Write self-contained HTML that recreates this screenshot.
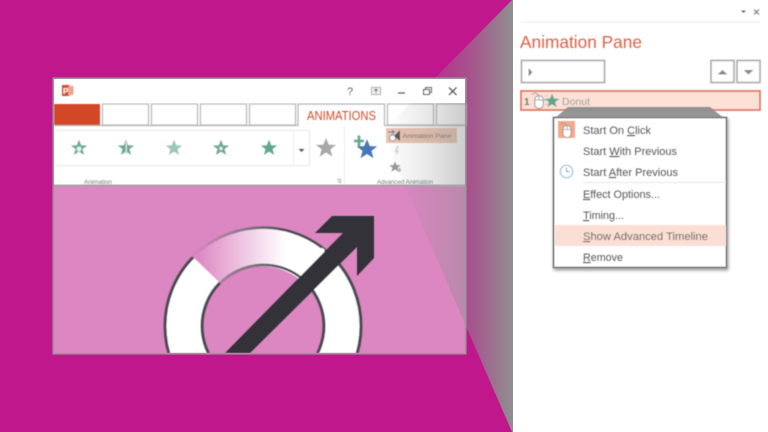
<!DOCTYPE html>
<html><head><meta charset="utf-8"><style>
html,body{margin:0;padding:0;width:768px;height:432px;overflow:hidden;background:#c0178c}
svg{display:block;font-family:"Liberation Sans",sans-serif}
.u{text-decoration:underline}
</style></head><body>
<svg width="768" height="432" viewBox="0 0 768 432" xmlns="http://www.w3.org/2000/svg">
<defs>
<clipPath id="slide"><rect x="54" y="186" width="411" height="167"/></clipPath>
<linearGradient id="beam" gradientUnits="userSpaceOnUse" x1="386" y1="0" x2="512" y2="0">
<stop offset="0" stop-color="#8f8f8f" stop-opacity="0"/>
<stop offset=".3" stop-color="#8f8f8f" stop-opacity=".18"/>
<stop offset=".63" stop-color="#8f8f8f" stop-opacity=".45"/>
<stop offset=".82" stop-color="#8f8f8f" stop-opacity=".72"/>
<stop offset="1" stop-color="#8f8f8f" stop-opacity="1"/>
</linearGradient>
<linearGradient id="seg" gradientUnits="userSpaceOnUse" x1="196" y1="0" x2="285" y2="0">
<stop offset="0" stop-color="#dc86c2"/>
<stop offset="1" stop-color="#fff"/>
</linearGradient>
<linearGradient id="segs" gradientUnits="userSpaceOnUse" x1="196" y1="0" x2="285" y2="0">
<stop offset="0" stop-color="#dc86c2"/>
<stop offset=".6" stop-color="#777"/>
<stop offset="1" stop-color="#4a4a4f"/>
</linearGradient>
<linearGradient id="mb" gradientUnits="userSpaceOnUse" x1="0" y1="100" x2="0" y2="117">
<stop offset="0" stop-color="#888"/><stop offset="1" stop-color="#999"/>
</linearGradient>
<filter id="sh" x="-10%" y="-10%" width="120%" height="120%"><feDropShadow dx="1" dy="2" stdDeviation="1.6" flood-color="#000" flood-opacity=".4"/></filter>
<filter id="soft"><feGaussianBlur stdDeviation=".4"/></filter>
<path id="st" d="M0-10.500 2.900-3.400 10.500-3.200 4.500 1.400 6.600 8.800 0 4.600-6.600 8.800-4.500 1.400-10.500-3.200-2.900-3.400Z"/>
<g id="mouse"><rect x="-4" y="-5" width="8" height="12" rx="3.600" fill="#fff" stroke="#9a9a9a" stroke-width="1"/><path d="M-4-1H4M0-5V-1" stroke="#9a9a9a" stroke-width=".8" fill="none"/><path d="M-1-5C-1-8-5-8-7-6" stroke="#9a9a9a" stroke-width=".8" fill="none"/></g>
</defs>

<rect width="768" height="432" fill="#c0178c"/>

<!-- window body -->
<rect x="53" y="78" width="413" height="276" fill="#dc86c2"/>
<rect x="54" y="103" width="411" height="82" fill="#fff"/>

<g filter="url(#soft)">
<!-- tabs -->
<rect x="54" y="104" width="46" height="21" fill="#d24726"/>
<g fill="#fff" stroke="#b5b5b5" stroke-width="1.200">
<rect x="102.500" y="104" width="46" height="21"/>
<rect x="151.500" y="104" width="46" height="21"/>
<rect x="200.500" y="104" width="46" height="21"/>
<rect x="249.500" y="104" width="46" height="21"/>
<rect x="387.500" y="104" width="46" height="21"/>
<rect x="436.500" y="104" width="30" height="21"/>
</g>
<path d="M54 125.500H298V104H384.500V125.500H465" fill="none" stroke="#b5b5b5" stroke-width="1.200"/>
<text x="307" y="120" font-size="12.500" fill="#d2492a" textLength="69" lengthAdjust="spacingAndGlyphs">ANIMATIONS</text>
<!-- ribbon lines -->
<path d="M54 130.500H309.500V165.500H54" fill="none" stroke="#e8e8e8" stroke-width="1"/>
<path d="M293.500 131V165M344.500 127V183" stroke="#ececec" stroke-width="1"/>
<path d="M298.500 149l3 3 3-3z" fill="#555"/>
<!-- stars -->
<g fill="#6fa897">
<use href="#st" transform="translate(79 148) scale(.78)"/>
<use href="#st" transform="translate(126 148) scale(.78)"/>
<use href="#st" transform="translate(174 148) scale(.78)" fill="#9cc7b8"/>
<use href="#st" transform="translate(221 148) scale(.78)"/>
<use href="#st" transform="translate(269 148) scale(.78)" fill="#5fa88d"/>
</g>
<circle cx="79" cy="149" r="2.500" fill="#e4efec"/>
<rect x="125.500" y="142" width="1.500" height="12" fill="#cfe3dc"/>
<rect x="219.500" y="147" width="3" height="3" fill="#e4efec"/>
<use href="#st" transform="translate(326 148) scale(.96)" fill="#a9a7a8"/>
<text x="84" y="184" font-size="6.500" fill="#777" textLength="28" lengthAdjust="spacingAndGlyphs">Animation</text>
<path d="M337 179.500h3.500v3.500M338 181l2 2" stroke="#999" stroke-width=".7" fill="none"/>
<!-- adv animation -->
<use href="#st" transform="translate(367 149.500) scale(.98)" fill="#4677b8"/>
<path d="M359 135.500v11M354 141h10" stroke="#5fa88d" stroke-width="2.600" fill="none"/>
<rect x="386" y="128" width="71" height="15" fill="#ebc4b0"/>
<path d="M388 132h6M392 130l2 2-2 2" stroke="#3f7fc4" stroke-width="1" fill="none"/>
<path d="M394 136 400 130v11z" fill="#555"/>
<circle cx="392.500" cy="138" r="3" fill="#fff" stroke="#777" stroke-width=".8"/>
<text x="402.500" y="138" font-size="6.800" fill="#666" textLength="49" lengthAdjust="spacingAndGlyphs">Animation Pane</text>
<path d="M397 146l-2.500 6h2l-1 5 3.500-6.500h-2l2-4.500z" fill="#d5d5d5"/>
<use href="#st" transform="translate(395 167) scale(.55)" fill="#999"/>
<circle cx="399" cy="170" r="2" fill="#bbb"/>
<text x="377" y="184" font-size="6.500" fill="#777" textLength="56" lengthAdjust="spacingAndGlyphs">Advanced Animation</text>

<!-- donut -->
<g clip-path="url(#slide)">
<circle cx="263" cy="326" r="79.500" fill="none" stroke="#4a4a4f" stroke-width="40"/>
<circle cx="263" cy="326" r="79.500" fill="none" stroke="#fff" stroke-width="34"/>
<path d="M193 257A98 98 0 0 1 325 250L299 279A61 61 0 0 0 220 283Z" fill="url(#seg)"/>
<path d="M193 257A98 98 0 0 1 322 247.500M220 283A61 61 0 0 1 300 277" fill="none" stroke="url(#segs)" stroke-width="2.500"/>
<path d="M225 353 343 233H315L332 216H374V258L357 276V247L250 353Z" fill="#333338"/>
</g>
</g>

<!-- beam -->
<path d="M513 0 512 0 386 128V142L512 432 513 432Z" fill="url(#beam)"/>

<!-- title bar -->
<rect x="54" y="79" width="411" height="24" fill="#fff"/>
<g filter="url(#soft)">
<rect x="62" y="85" width="7.500" height="11" fill="#d24726"/>
<rect x="68" y="86" width="5.500" height="9" fill="#f0a58f"/>
<text x="63" y="94" font-size="8" font-weight="bold" fill="#fff">P</text>
<text x="347" y="95" font-size="11" fill="#666">?</text>
<rect x="371.500" y="87.500" width="9" height="7" fill="#f2f2f2" stroke="#999" stroke-width=".8"/>
<path d="M376 93v-4M374 91l2-2 2 2" stroke="#555" stroke-width=".8" fill="none"/>
<path d="M398 93h7" stroke="#555" stroke-width="1.200"/>
<path d="M423.500 89.500h6v5h-6zM425.500 89.500v-2h6v5h-2" fill="none" stroke="#666" stroke-width="1"/>
<path d="M449 87.500l7.500 7.500M456.500 87.500l-7.500 7.500" stroke="#444" stroke-width="1.200"/>
</g>

<!-- window border -->
<rect x="53.250" y="78.250" width="412.500" height="275.500" fill="none" stroke="#9c969c" stroke-width="1.600"/>
<rect x="54" y="184.500" width="411" height="2" fill="#a8a4a8"/>

<!-- pane -->
<rect x="513" y="0" width="255" height="432" fill="#fff"/>
<g filter="url(#soft)">
<path d="M741 10.500l2.500 2.500 2.500-2.500z" fill="#666"/>
<path d="M754 9.500l5 5M759 9.500l-5 5" stroke="#777" stroke-width="1.100"/>
<rect x="521" y="21.500" width="239" height="1.200" fill="#efefef"/>
<text x="520" y="48" font-size="17.500" fill="#de5f44" textLength="122" lengthAdjust="spacingAndGlyphs">Animation Pane</text>
<rect x="521.500" y="60.500" width="83" height="22" fill="#fff" stroke="#a9a9a9" stroke-width="1.600"/>
<path d="M528.500 68v8.500l4-4.250z" fill="#888"/>
<rect x="711" y="60.500" width="23" height="22" fill="#fff" stroke="#a9a9a9" stroke-width="1.600"/>
<rect x="737" y="60.500" width="23" height="22" fill="#fff" stroke="#a9a9a9" stroke-width="1.600"/>
<path d="M717.500 74.500l5-4.500 5 4.500z" fill="#888"/>
<path d="M743.500 70l5 4.500 5-4.500z" fill="#888"/>
<rect x="521" y="91" width="239" height="19" fill="#fde0d6" stroke="#dc6a50" stroke-width="1.600"/>
<text x="524" y="105" font-size="10" font-weight="bold" fill="#666">1</text>
<use href="#mouse" transform="translate(539 101) scale(1.050)"/>
<path d="M547 95l-1 1M546 100h-2M547 104l-1 1" stroke="#77a897" stroke-width=".7"/>
<use href="#st" transform="translate(552 101) scale(.7)" fill="#5fa88d"/>
<text x="562" y="105" font-size="10.500" fill="#999" textLength="28" lengthAdjust="spacingAndGlyphs">Donut</text>
</g>
<!-- beam to menu -->
<path d="M555 118 568 107H710L724 118Z" fill="url(#mb)" filter="url(#soft)"/>
<!-- menu -->
<rect x="553.500" y="117.500" width="173" height="150" fill="#fff" stroke="#8a8a8a" stroke-width="1.800" filter="url(#sh)"/>
<g filter="url(#soft)">
<rect x="558" y="121" width="17" height="17" fill="#f4a98a"/>
<use href="#mouse" transform="translate(567 130.500)"/>
<circle cx="566.500" cy="171.500" r="6.200" fill="#fff" stroke="#8fb3d9" stroke-width="1"/>
<path d="M566.500 167.500v4h3" stroke="#6f8faf" stroke-width=".9" fill="none"/>
<rect x="583" y="182" width="143" height="1" fill="#e8e8e8"/>
<rect x="555" y="225" width="171" height="21" fill="#fbdfd4"/>
<g font-size="11" fill="#555">
<text x="583" y="134" textLength="68" lengthAdjust="spacingAndGlyphs">Start On <tspan class="u">C</tspan>lick</text>
<text x="583" y="155" textLength="94" lengthAdjust="spacingAndGlyphs">Start <tspan class="u">W</tspan>ith Previous</text>
<text x="583" y="176" textLength="95" lengthAdjust="spacingAndGlyphs">Start <tspan class="u">A</tspan>fter Previous</text>
<text x="583" y="198" textLength="77" lengthAdjust="spacingAndGlyphs"><tspan class="u">E</tspan>ffect Options...</text>
<text x="583" y="219" textLength="41" lengthAdjust="spacingAndGlyphs"><tspan class="u">T</tspan>iming...</text>
<text x="583" y="240" textLength="125" lengthAdjust="spacingAndGlyphs"><tspan class="u">S</tspan>how Advanced Timeline</text>
<text x="583" y="261" textLength="40" lengthAdjust="spacingAndGlyphs"><tspan class="u">R</tspan>emove</text>
</g>
</g>
</svg>
</body></html>
